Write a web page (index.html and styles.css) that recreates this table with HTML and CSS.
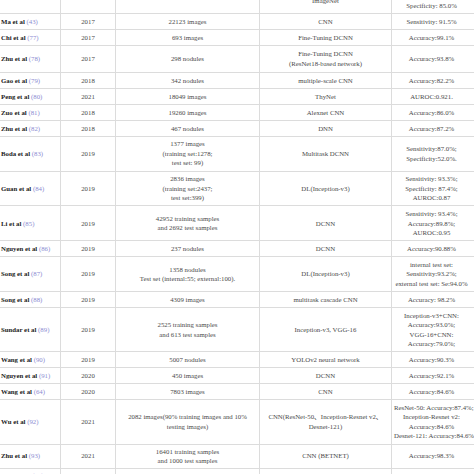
FILE: index.html
```html
<!DOCTYPE html>
<html>
<head>
<meta charset="utf-8">
<link rel="stylesheet" href="styles.css">
</head>
<body>
<div class="page">
<table class="grid">
<colgroup>
<col class="c-author"><col class="c-year"><col class="c-data"><col class="c-method"><col class="c-result">
</colgroup>
<tbody>
<tr><td class="author"><b>Xu et al</b> <span class="ref">(42)</span></td><td>2017</td><td>1000 images</td><td>CNN pretrained on<br>ImageNet</td><td class="result">Accuracy: 86.5%;<br>Sensitivity: 87.0%;<br>Specificity: 85.0%</td></tr>
<tr><td class="author"><b>Ma et al</b> <span class="ref">(43)</span></td><td>2017</td><td>22123 images</td><td>CNN</td><td class="result">Sensitivity: 91.5%</td></tr>
<tr><td class="author"><b>Chi et al</b> <span class="ref">(77)</span></td><td>2017</td><td>693 images</td><td>Fine-Tuning DCNN</td><td class="result">Accuracy:99.1%</td></tr>
<tr class="tall"><td class="author"><b>Zhu et al</b> <span class="ref">(78)</span></td><td>2017</td><td>298 nodules</td><td>Fine-Tuning DCNN<br>(ResNet18-based network)</td><td class="result">Accuracy:93.8%</td></tr>
<tr><td class="author"><b>Gao et al</b> <span class="ref">(79)</span></td><td>2018</td><td>342 nodules</td><td>multiple-scale CNN</td><td class="result">Accuracy:82.2%</td></tr>
<tr><td class="author"><b>Peng et al</b> <span class="ref">(80)</span></td><td>2021</td><td>18049 images</td><td>ThyNet</td><td class="result">AUROC:0.921.</td></tr>
<tr><td class="author"><b>Zuo et al</b> <span class="ref">(81)</span></td><td>2018</td><td>19260 images</td><td>Alexnet CNN</td><td class="result">Accuracy:86.0%</td></tr>
<tr><td class="author"><b>Zhu et al</b> <span class="ref">(82)</span></td><td>2018</td><td>467 nodules</td><td>DNN</td><td class="result">Accuracy:87.2%</td></tr>
<tr><td class="author"><b>Boda et al</b> <span class="ref">(83)</span></td><td>2019</td><td>1377 images<br>(training set:1278;<br>test set: 99)</td><td>Multitask DCNN</td><td class="result">Sensitivity:87.0%;<br>Specificity:52.0%.</td></tr>
<tr><td class="author"><b>Guan et al</b> <span class="ref">(84)</span></td><td>2019</td><td>2836 images<br>(training set:2437;<br>test set:399)</td><td>DL(Inception-v3)</td><td class="result">Sensitivity: 93.3%;<br>Specificity: 87.4%;<br>AUROC:0.87</td></tr>
<tr><td class="author"><b>Li et al</b> <span class="ref">(85)</span></td><td>2019</td><td>42952 training samples<br>and 2692 test samples</td><td>DCNN</td><td class="result">Sensitivity: 93.4%;<br>Accuracy:89.8%;<br>AUROC:0.95</td></tr>
<tr><td class="author"><b>Nguyen et al</b> <span class="ref">(86)</span></td><td>2019</td><td>237 nodules</td><td>DCNN</td><td class="result">Accuracy:90.88%</td></tr>
<tr><td class="author"><b>Song et al</b> <span class="ref">(87)</span></td><td>2019</td><td>1358 nodules<br>Test set (internal:55; external:100).</td><td>DL(Inception-v3)</td><td class="result">internal test set:<br>Sensitivity:93.2%;<br>external test set: Se:94.0%</td></tr>
<tr><td class="author"><b>Song et al</b> <span class="ref">(88)</span></td><td>2019</td><td>4309 images</td><td>multitask cascade CNN</td><td class="result">Accuracy: 98.2%</td></tr>
<tr><td class="author"><b>Sundar et al</b> <span class="ref">(89)</span></td><td>2019</td><td>2525 training samples<br>and 613 test samples</td><td>Inception-v3, VGG-16</td><td class="result">Inception-v3+CNN:<br>Accuracy:93.0%;<br>VGG-16+CNN:<br>Accuracy:79.0%;</td></tr>
<tr><td class="author"><b>Wang et al</b> <span class="ref">(90)</span></td><td>2019</td><td>5007 nodules</td><td>YOLOv2 neural network</td><td class="result">Accuracy:90.3%</td></tr>
<tr><td class="author"><b>Nguyen et al</b> <span class="ref">(91)</span></td><td>2020</td><td>450 images</td><td>DCNN</td><td class="result">Accuracy:92.1%</td></tr>
<tr><td class="author"><b>Wang et al</b> <span class="ref">(64)</span></td><td>2020</td><td>7803 images</td><td>CNN</td><td class="result">Accuracy:84.6%</td></tr>
<tr><td class="author"><b>Wu et al</b> <span class="ref">(92)</span></td><td>2021</td><td>2082 images(90% training images and 10%<br>testing images)</td><td>CNN(ResNet-50、Inception-Resnet v2、<br>Desnet-121)</td><td class="result">ResNet-50: Accuracy:87.4%;<br>Inception-Resnet v2:<br>Accuracy:84.6%<br>Desnet-121: Accuracy:84.6%</td></tr>
<tr class="short"><td class="author"><b>Zhu et al</b> <span class="ref">(93)</span></td><td>2021</td><td>16401 training samples<br>and 1000 test samples</td><td>CNN (BETNET)</td><td class="result">Accuracy:98.3%</td></tr>
<tr><td class="author"><b>Chen et al</b> <span class="ref">(94)</span></td><td>2022</td><td>1200 images</td><td>CNN</td><td class="result">Accuracy:90.0%</td></tr>
</tbody>
</table>
</div>
</body>
</html>
```
FILE: styles.css
```css
html, body {
  margin: 0;
  padding: 0;
  background: #ffffff;
  overflow: hidden;
  width: 474px;
  height: 474px;
}
.page {
  margin-top: -22px;
  margin-left: -1px;
}
.grid {
  border-collapse: collapse;
  table-layout: fixed;
  width: 482px;
  font-family: "Liberation Serif", "Noto Sans CJK SC", serif;
  font-size: 6.8px;
  line-height: 9.44px;
  color: #4a4a4a;
}
.c-author { width: 61px; }
.c-year { width: 55px; }
.c-data { width: 144px; }
.c-method { width: 132px; }
.c-result { width: 90px; }
.grid td {
  border: 1px solid #dcdcdc;
  padding: 2.78px 2px;
  text-align: center;
  vertical-align: middle;
  white-space: nowrap;
  overflow: visible;
}
.grid td.author {
  text-align: left;
  padding-left: 1px;
  color: #222;
}
.grid td.author b {
  font-weight: bold;
}
.ref {
  color: #8c8cd2;
}
.grid td.result {
  padding-right: 12px;
}
.grid tr.tall td {
  padding-top: 3.6px;
  padding-bottom: 3.6px;
}
.grid tr.short td {
  padding-top: 2.1px;
  padding-bottom: 2.1px;
}
```
